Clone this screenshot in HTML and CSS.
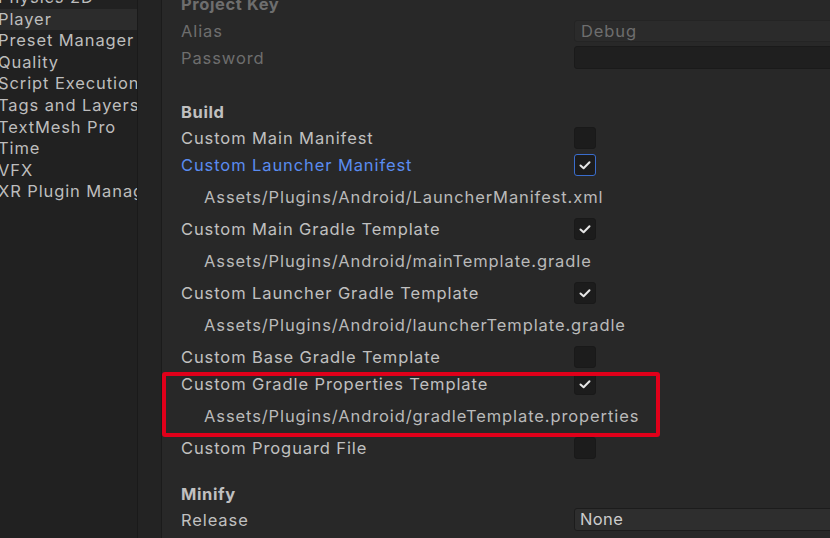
FILE: index.html
```html
<!DOCTYPE html>
<html>
<head>
<meta charset="utf-8">
<link rel="stylesheet" href="styles.css">
</head>
<body>
<div class="app">
  <div class="sidebar">
    <div class="side-list">
      <div class="side-item">Physics 2D</div>
      <div class="side-item selected">Player</div>
      <div class="side-item">Preset Manager</div>
      <div class="side-item">Quality</div>
      <div class="side-item">Script Execution Order</div>
      <div class="side-item">Tags and Layers</div>
      <div class="side-item">TextMesh Pro</div>
      <div class="side-item">Time</div>
      <div class="side-item">VFX</div>
      <div class="side-item">XR Plugin Management</div>
    </div>
  </div>
  <div class="strip"></div>
  <div class="main">
    <div class="content">
      <div class="row header disabled"><span class="label">Project Key</span></div>
      <div class="row disabled">
        <span class="label">Alias</span>
        <div class="control"><div class="field popup">Debug</div></div>
      </div>
      <div class="row disabled">
        <span class="label">Password</span>
        <div class="control"><div class="field input"></div></div>
      </div>

      <div class="row header section"><span class="label">Build</span></div>
      <div class="row">
        <span class="label">Custom Main Manifest</span>
        <div class="control"><span class="check"></span></div>
      </div>
      <div class="row">
        <span class="label active">Custom Launcher Manifest</span>
        <div class="control"><span class="check on focus"><svg viewBox="0 0 22 22"><path d="M6.5 11.5 L9.6 14.3 L15.5 8.2"/></svg></span></div>
      </div>
      <div class="row path"><span class="label">Assets/Plugins/Android/LauncherManifest.xml</span></div>
      <div class="row">
        <span class="label">Custom Main Gradle Template</span>
        <div class="control"><span class="check on"><svg viewBox="0 0 22 22"><path d="M6.5 11.5 L9.6 14.3 L15.5 8.2"/></svg></span></div>
      </div>
      <div class="row path"><span class="label">Assets/Plugins/Android/mainTemplate.gradle</span></div>
      <div class="row">
        <span class="label">Custom Launcher Gradle Template</span>
        <div class="control"><span class="check on"><svg viewBox="0 0 22 22"><path d="M6.5 11.5 L9.6 14.3 L15.5 8.2"/></svg></span></div>
      </div>
      <div class="row path"><span class="label">Assets/Plugins/Android/launcherTemplate.gradle</span></div>
      <div class="row">
        <span class="label">Custom Base Gradle Template</span>
        <div class="control"><span class="check"></span></div>
      </div>
      <div class="group">
        <div class="row">
          <span class="label">Custom Gradle Properties Template</span>
          <div class="control"><span class="check on"><svg viewBox="0 0 22 22"><path d="M6.5 11.5 L9.6 14.3 L15.5 8.2"/></svg></span></div>
        </div>
        <div class="row path"><span class="label">Assets/Plugins/Android/gradleTemplate.properties</span></div>
        <div class="highlight"></div>
      </div>
      <div class="row">
        <span class="label">Custom Proguard File</span>
        <div class="control"><span class="check"></span></div>
      </div>

      <div class="row header section2"><span class="label">Minify</span></div>
      <div class="row">
        <span class="label">Release</span>
        <div class="control"><div class="field dropdown">None</div></div>
      </div>
    </div>
  </div>
</div>
</body>
</html>
```

FILE: styles.css
```css
* { box-sizing: border-box; }
html, body {
  margin: 0;
  padding: 0;
  width: 830px;
  height: 538px;
  overflow: hidden;
  background: #282828;
  font-family: Inter, "Noto Sans", sans-serif;
  font-size: 16.5px;
  letter-spacing: 0.9px;
  color: #c0c0c0;
}
.app {
  display: flex;
  height: 538px;
}
.sidebar {
  width: 138px;
  flex: none;
  background: #212121;
  border-right: 1px solid #1a1a1a;
  overflow: hidden;
}
.side-list {
  margin-top: -13px;
}
.side-item {
  height: 21.6px;
  line-height: 21.6px;
  white-space: nowrap;
  overflow: hidden;
  text-indent: -2px;
  color: #bdbdbd;
}
.side-item.selected {
  background: #2c2c2c;
}
.strip {
  width: 24px;
  flex: none;
  background: #232323;
  border-right: 1px solid #1b1b1b;
}
.main {
  flex: 1;
  overflow: hidden;
  padding-left: 19px;
}
.content {
  margin-top: -9px;
}
.row {
  display: flex;
  align-items: center;
  height: 27px;
  white-space: nowrap;
}
.label {
  width: 393px;
  flex: none;
}
.row.path {
  margin: 5px 0;
}
.row.path .label {
  width: auto;
  padding-left: 23px;
  color: #bababa;
}
.row.header {
  height: 25px;
  font-weight: 700;
  letter-spacing: 0.6px;
}
.row.header.disabled {
  height: 26px;
}
.row.section {
  margin-top: 29px;
  height: 24px;
}
.row.section2 {
  margin-top: 21px;
  height: 24px;
}
.disabled .label {
  color: #6e6e6e;
}
.label.active {
  color: #5a8cf0;
}
.control {
  flex: 1;
  display: flex;
  align-items: center;
}
.field {
  width: 300px;
  height: 23px;
  border-radius: 3px;
  padding-left: 6px;
  line-height: 21px;
}
.field.popup {
  background: #2b2b2b;
  border: 1px solid #242424;
  color: #6e6e6e;
  height: 22px;
}
.field.input {
  background: #1f1f1f;
  border: 1px solid #1a1a1a;
}
.field.dropdown {
  background: #2e2e2e;
  border: 1px solid #1c1c1c;
  color: #cccccc;
  padding-left: 5px;
  letter-spacing: 0.4px;
}
.check {
  width: 22px;
  height: 22px;
  border-radius: 3px;
  background: #1c1c1c;
  border: 1px solid #191919;
  display: flex;
  align-items: center;
  justify-content: center;
}
.check svg {
  width: 22px;
  height: 22px;
  flex: none;
}
.check svg path {
  fill: none;
  stroke: #e6e6e6;
  stroke-width: 2;
  stroke-linecap: round;
  stroke-linejoin: round;
}
.check.focus {
  border: 1.5px solid #3a6dcc;
}
.group {
  position: relative;
}
.highlight {
  position: absolute;
  left: -19px;
  top: 2px;
  width: 498px;
  height: 65px;
  border: 4px solid #e0001a;
  border-radius: 3px;
  pointer-events: none;
}
```
